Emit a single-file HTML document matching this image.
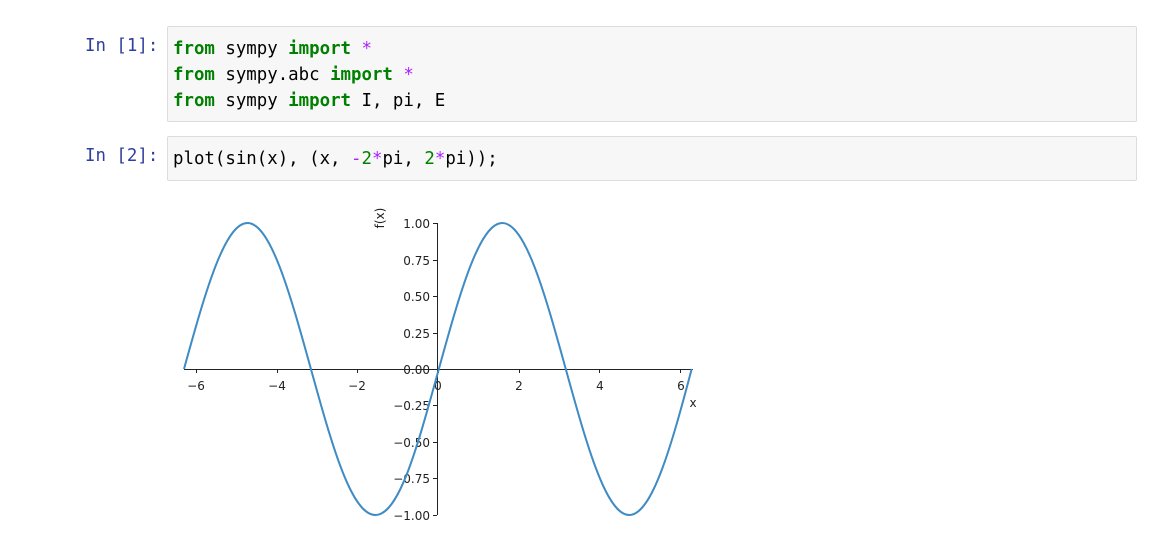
<!DOCTYPE html><html><head><style>
body{margin:0;background:#fff;width:1152px;height:547px;overflow:hidden;position:relative}
.p{position:absolute;left:85px;font:17.4px "DejaVu Sans Mono",monospace;color:#303F9F}
.c{position:absolute;left:167px;width:970px;background:#f7f7f7;border:1px solid #dcdcdc;border-radius:2px;box-sizing:border-box;padding:9px 5px;font:17.4px/26px "DejaVu Sans Mono",monospace;color:#000;white-space:pre}
.k{color:#008000;font-weight:bold}.o{color:#aa22ff}.n{color:#008000}
svg text{font-family:"DejaVu Sans",sans-serif;font-size:12px;fill:#222}
</style></head><body>
<div class="p" style="top:36px">In [1]:</div>
<div class="c" style="top:26px;height:96px"><span class="k">from</span> sympy <span class="k">import</span> <span class="o">*</span>
<span class="k">from</span> sympy.abc <span class="k">import</span> <span class="o">*</span>
<span class="k">from</span> sympy <span class="k">import</span> I, pi, E</div>
<div class="p" style="top:146px">In [2]:</div>
<div class="c" style="top:136px;height:45px">plot(sin(x), (x, <span class="o">-</span><span class="n">2</span><span class="o">*</span>pi, <span class="n">2</span><span class="o">*</span>pi));</div>
<svg width="1152" height="547" style="position:absolute;left:0;top:0">
<g stroke="#222" stroke-width="1" fill="none">
<line x1="184" y1="369.5" x2="693" y2="369.5"/>
<line x1="437.5" y1="223" x2="437.5" y2="515"/>
<path d="M196.5,369v4M277.5,369v4M357.5,369v4M438.5,369v4M519.5,369v4M599.5,369v4M680.5,369v4"/>
<path d="M437,223.5h-4M437,260.5h-4M437,296.5h-4M437,333.5h-4M437,369.5h-4M437,405.5h-4M437,442.5h-4M437,478.5h-4M437,515.5h-4"/>
</g>
<g text-anchor="middle">
<text x="196" y="390">−6</text><text x="277" y="390">−4</text><text x="357" y="390">−2</text><text x="438" y="390">0</text><text x="519" y="390">2</text><text x="600" y="390">4</text><text x="681" y="390">6</text>
</g>
<g text-anchor="end">
<text x="430" y="228">1.00</text><text x="430" y="265">0.75</text><text x="430" y="301">0.50</text><text x="430" y="338">0.25</text><text x="430" y="374">0.00</text><text x="430" y="410">−0.25</text><text x="430" y="447">−0.50</text><text x="430" y="483">−0.75</text><text x="430" y="520">−1.00</text>
</g>
<text x="693" y="407" text-anchor="middle">x</text>
<text transform="translate(384,218) rotate(-90)" text-anchor="middle">f(x)</text>
<path fill="none" stroke="#3f8bc4" stroke-width="2" d="M184,369 c21.21,-76.66 40.57,-146 63.46,-146 s42.25,69.34 63.46,146 s40.57,146 64.46,146 s42.25,-69.34 63.46,-146 s40.57,-146 63.46,-146 s42.25,69.34 63.46,146 s40.57,146 63.46,146 s42.25,-69.34 62.46,-146"/>
</svg>
</body></html>
